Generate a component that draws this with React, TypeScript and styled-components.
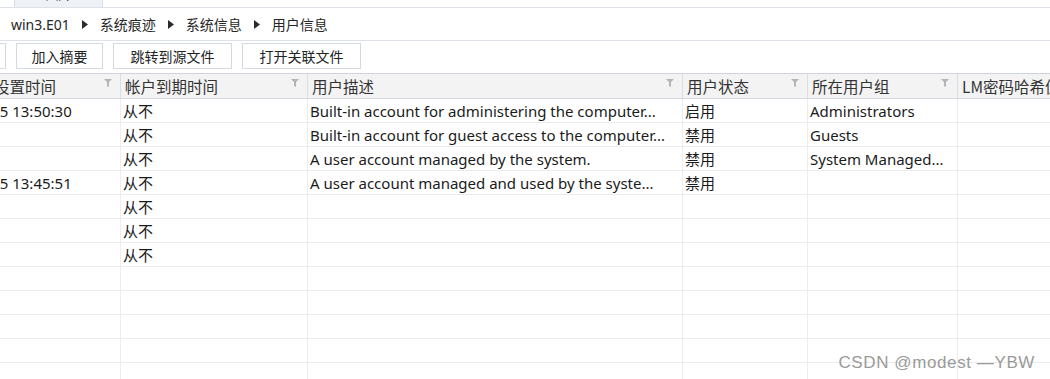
import React from 'react';
import styled, { createGlobalStyle } from 'styled-components';

const GlobalStyle = createGlobalStyle`
  html, body {
    margin: 0;
    padding: 0;
    background: #ffffff;
  }
  body {
    font-family: "Noto Sans", "Noto Sans CJK SC", sans-serif;
    color: #1b1b1b;
    overflow: hidden;
  }
`;

const Page = styled.div`
  position: relative;
  width: 1050px;
  height: 379px;
  overflow: hidden;
  background: #fff;
`;

const TabBar = styled.div`
  height: 7px;
  border-bottom: 1px solid #dde2ea;
  overflow: hidden;
  padding-left: 14px;
  display: flex;
`;

const Tab = styled.div`
  width: 89px;
  height: 28px;
  margin-top: -21px;
  box-sizing: border-box;
  background: #eef1f5;
  border-left: 1px solid #d8dde6;
  border-right: 1px solid #d8dde6;
  display: flex;
  align-items: center;
  justify-content: center;
  font-size: 13px;
  color: #333;
`;

const Crumbs = styled.div`
  height: 32px;
  display: flex;
  align-items: center;
  padding-left: 11px;
  gap: 12px;
  font-size: 14px;
  color: #262626;
  border-bottom: 1px solid #dde2ea;
`;

const Arrow = styled.svg`
  width: 6px;
  height: 9px;
  fill: #2b2b2b;
`;

const Toolbar = styled.div`
  height: 30px;
  box-sizing: border-box;
  display: flex;
  align-items: flex-start;
  gap: 10px;
  padding-top: 2px;
`;

const ToolButton = styled.button<{ $w: number; $shift?: number }>`
  width: ${({ $w }) => $w}px;
  margin-left: ${({ $shift }) => $shift ?? 0}px;
  height: 26px;
  box-sizing: border-box;
  border: 1px solid #d5dae2;
  background: #fff;
  font-family: "Noto Sans CJK SC", sans-serif;
  font-size: 14px;
  color: #222;
  padding: 0;
  flex-shrink: 0;
`;

const TableClip = styled.div`
  margin-top: 2px;
  overflow: hidden;
`;

const Grid = styled.div`
  margin-left: -72px;
  display: grid;
  grid-template-columns: 193px 187px 375px 125px 150px 160px;
`;

const HeadCell = styled.div`
  height: 26px;
  box-sizing: border-box;
  background: #f3f3f4;
  border-top: 1px solid #cfd3de;
  border-bottom: 1px solid #d6d8e0;
  border-right: 1px solid #dcdde4;
  display: flex;
  align-items: center;
  justify-content: space-between;
  padding: 0 8px 0 4px;
  font-family: "Noto Sans CJK SC", sans-serif;
  font-size: 15.5px;
  color: #333333;
  white-space: nowrap;
  overflow: hidden;
`;

const Filter = styled.svg`
  width: 8px;
  height: 8px;
  fill: #b4b4b8;
  flex-shrink: 0;
  margin-top: -6px;
`;

const Cell = styled.div`
  height: 24px;
  box-sizing: border-box;
  border-right: 1px solid #ececec;
  border-bottom: 1px solid #ececec;
  padding: 0 4px 0 2px;
  display: flex;
  align-items: center;
  font-size: 15px;
  white-space: nowrap;
  overflow: hidden;
`;

const Watermark = styled.div`
  position: absolute;
  right: 15px;
  bottom: 6px;
  font-family: "Liberation Sans", Arial, sans-serif;
  font-size: 17px;
  color: #8a8a8a;
  opacity: 0.85;
  letter-spacing: 0.6px;
`;

const columns = ['上次密码设置时间', '帐户到期时间', '用户描述', '用户状态', '所在用户组', 'LM密码哈希值'];

const rows: string[][] = [
  ['2023-02-15 13:50:30', '从不', 'Built-in account for administering the computer...', '启用', 'Administrators', ''],
  ['', '从不', 'Built-in account for guest access to the computer...', '禁用', 'Guests', ''],
  ['', '从不', 'A user account managed by the system.', '禁用', 'System Managed...', ''],
  ['2023-02-15 13:45:51', '从不', 'A user account managed and used by the syste...', '禁用', '', ''],
  ['', '从不', '', '', '', ''],
  ['', '从不', '', '', '', ''],
  ['', '从不', '', '', '', ''],
  ['', '', '', '', '', ''],
  ['', '', '', '', '', ''],
  ['', '', '', '', '', ''],
  ['', '', '', '', '', ''],
  ['', '', '', '', '', ''],
];

const crumbs = ['win3.E01', '系统痕迹', '系统信息', '用户信息'];

const ArrowIcon = () => (
  <Arrow viewBox="0 0 6 9">
    <polygon points="0,0 6,4.5 0,9" />
  </Arrow>
);

const FilterIcon = () => (
  <Filter viewBox="0 0 8 8">
    <polygon points="0,0 8,0 5,3 5,8 3,7 3,3" />
  </Filter>
);

const App = () => {
  return (
    <Page>
      <GlobalStyle />
      <TabBar>
        <Tab>图片</Tab>
      </TabBar>
      <Crumbs>
        {crumbs.map((c, i) => (
          <React.Fragment key={c}>
            {i > 0 && <ArrowIcon />}
            <span>{c}</span>
          </React.Fragment>
        ))}
      </Crumbs>
      <Toolbar>
        <ToolButton $w={80} $shift={-74}>导出</ToolButton>
        <ToolButton $w={87}>加入摘要</ToolButton>
        <ToolButton $w={119}>跳转到源文件</ToolButton>
        <ToolButton $w={119}>打开关联文件</ToolButton>
      </Toolbar>
      <TableClip>
        <Grid>
          {columns.map((c) => (
            <HeadCell key={c}>
              <span>{c}</span>
              <FilterIcon />
            </HeadCell>
          ))}
          {rows.map((r, ri) =>
            r.map((v, ci) => <Cell key={`${ri}-${ci}`}>{v}</Cell>)
          )}
        </Grid>
      </TableClip>
      <Watermark>CSDN @modest —YBW</Watermark>
    </Page>
  );
};

export default App;
